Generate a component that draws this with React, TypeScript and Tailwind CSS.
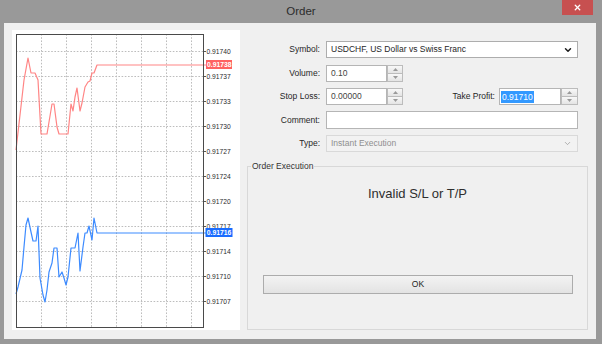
import React from "react";
import { X, ChevronDown } from "lucide-react";

const redPts =
  "16,150 24,80 28,58 31,73 35,73 38,80 41,134 47,134 52,104 54,104 57,127 59,134 68,134 71,104 73,111 75,97 77,88 80,111 82,103 85,87 88,82 90,81 92,73 94,73 97,65 206,65";
const bluePts =
  "16,294 18,287 22,270 24,247 26,225 28,218 31,232 33,241 36,241 38,226 40,278 43,295 45,302 47,290 49,272 52,263 54,248 57,248 59,277 62,272 64,278 66,285 68,277 71,248 75,248 78,233 80,271 83,247 85,233 87,233 89,226 92,240 94,218 97,233 206,233";

const prices = [
  "0.91740",
  "0.91737",
  "0.91733",
  "0.91730",
  "0.91727",
  "0.91724",
  "0.91720",
  "0.91717",
  "0.91714",
  "0.91710",
  "0.91707",
];
const vx = [41, 66, 91, 116, 141, 166, 191];

function Chart() {
  return (
    <svg width="228" height="300" viewBox="12 30 228 300" className="block">
      {vx.map((x) => (
        <line key={x} x1={x + 0.5} y1={34} x2={x + 0.5} y2={327} stroke="#bdbdbd" strokeDasharray="1.6 1.6" strokeWidth="1" />
      ))}
      {prices.map((p, i) => {
        const y = 51 + i * 25 + 0.5;
        return (
          <g key={p}>
            <line x1={16} y1={y} x2={203} y2={y} stroke="#bdbdbd" strokeDasharray="1.6 1.6" strokeWidth="1" />
            <line x1={203} y1={y} x2={206} y2={y} stroke="#555" strokeWidth="1" />
            <text x={206.5} y={y + 2.4} fontSize="6.7" fill="#2a2a2a" fontFamily="'Liberation Sans', Arial, sans-serif">
              {p}
            </text>
          </g>
        );
      })}
      <polyline points={redPts} fill="none" stroke="#ff8585" strokeWidth="1.2" strokeLinejoin="round" />
      <polyline points={bluePts} fill="none" stroke="#3d8bff" strokeWidth="1.2" strokeLinejoin="round" />
      <rect x={16.5} y={34.5} width={187} height={293} fill="none" stroke="#4a4a4a" strokeWidth="1" />
      <rect x={206} y={60} width={26} height={9} fill="#ff6262" />
      <text x={207} y={67} fontSize="6.8" fontWeight="bold" fill="#fff" fontFamily="'Liberation Sans', Arial, sans-serif">
        0.91738
      </text>
      <rect x={205.5} y={228} width={27} height={9} fill="#1a6cff" />
      <text x={206.8} y={235} fontSize="6.8" fontWeight="bold" fill="#fff" fontFamily="'Liberation Sans', Arial, sans-serif">
        0.91716
      </text>
    </svg>
  );
}

function Spin({ w = "w-[16px]" }: { w?: string }) {
  return (
    <div className={`${w} h-[17px] flex flex-col`}>
      <div className="h-[9px] border border-[#bcbcbc] bg-linear-to-b from-[#f8f8f8] to-[#e4e4e4] flex items-center justify-center">
        <svg width="5" height="3" viewBox="0 0 5 3">
          <path d="M0 3 L2.5 0 L5 3Z" fill="#9a9a9a" />
        </svg>
      </div>
      <div className="h-[8px] border border-t-0 border-[#bcbcbc] bg-linear-to-b from-[#f8f8f8] to-[#e4e4e4] flex items-center justify-center">
        <svg width="5" height="3" viewBox="0 0 5 3">
          <path d="M0 0 L2.5 3 L5 0Z" fill="#9a9a9a" />
        </svg>
      </div>
    </div>
  );
}

function Label({ children }: { children: React.ReactNode }) {
  return <div className="w-[73px] text-right pr-0 leading-none">{children}</div>;
}

export default function App() {
  return (
    <div className="w-[602px] h-[344px] bg-[#999999] flex flex-col font-['Liberation_Sans',Arial,sans-serif] text-[8.5px] text-[#262626]">
      <div className="h-[23px] grid grid-cols-[1fr_auto_1fr]">
        <div />
        <div className="text-[11.5px] text-[#2b2b2b] leading-[23px]">Order</div>
        <div className="flex justify-end pr-[9px]">
          <div className="w-[31px] h-[15px] bg-[#c75050] flex items-center justify-center">
            <X size={9} strokeWidth={3.5} color="#fff" />
          </div>
        </div>
      </div>
      <div className="ml-[4px] mr-[6px] h-[316px] bg-[#f0f0f0] flex pl-[8px] pr-[8px] pt-[7px] pb-[9px]">
        <div className="w-[228px] h-[300px] bg-white">
          <Chart />
        </div>
        <div className="ml-[7px] flex-1 flex flex-col">
          {/* Symbol */}
          <div className="mt-[11px] h-[17px] flex items-center">
            <Label>Symbol:</Label>
            <div className="ml-[6px] w-[252px] h-[17px] bg-white border border-[#adadad] flex items-center pl-[4px] pr-[4px]">
              <span className="flex-1">USDCHF, US Dollar vs Swiss Franc</span>
              <ChevronDown size={10} strokeWidth={3.5} color="#1a1a1a" />
            </div>
          </div>
          {/* Volume */}
          <div className="mt-[7px] h-[17px] flex items-center">
            <Label>Volume:</Label>
            <div className="ml-[6px] w-[61px] h-[17px] bg-white border border-[#b5b5b5] flex items-center pl-[4px] text-[#444]">
              0.10
            </div>
            <Spin />
          </div>
          {/* Stop Loss / Take Profit */}
          <div className="mt-[6px] h-[17px] flex items-center">
            <Label>Stop Loss:</Label>
            <div className="ml-[6px] w-[61px] h-[17px] bg-white border border-[#b5b5b5] flex items-center pl-[4px] text-[#444]">
              0.00000
            </div>
            <Spin />
            <div className="flex-1 text-right leading-none">Take Profit:</div>
            <div className="ml-[4px] w-[62px] h-[17px] bg-white border border-[#b5b5b5] flex items-center pl-[1px]">
              <span className="bg-[#3399ff] text-white px-[1px] leading-[12px]">0.91710</span>
            </div>
            <Spin w="w-[17px]" />
            <div className="w-[10px]" />
          </div>
          {/* Comment */}
          <div className="mt-[6px] h-[18px] flex items-center">
            <Label>Comment:</Label>
            <div className="ml-[6px] w-[252px] h-[18px] bg-white border border-[#b5b5b5]" />
          </div>
          {/* Type */}
          <div className="mt-[6px] h-[17px] flex items-center">
            <Label>Type:</Label>
            <div className="ml-[6px] w-[252px] h-[17px] bg-[#f2f2f2] border border-[#d9d9d9] flex items-center pl-[4px] pr-[5px] text-[#8f8f8f]">
              <span className="flex-1">Instant Execution</span>
              <ChevronDown size={9} strokeWidth={2} color="#9a9a9a" />
            </div>
          </div>
          {/* Group */}
          <fieldset className="mt-[9px] flex-1 border border-[#d8d8d8] m-0 p-0 min-w-0">
            <legend className="ml-[3px] px-[1px] leading-[10px] text-[#333]">Order Execution</legend>
            <div className="flex flex-col">
              <div className="mt-[15px] text-center text-[13px] leading-[16px] text-[#2e2e2e]">Invalid S/L or T/P</div>
              <div className="mt-[73px] ml-[15px] w-[310px] h-[19px] border border-[#acacac] bg-linear-to-b from-[#f3f3f3] to-[#e3e3e3] flex items-center justify-center text-[#222]">
                OK
              </div>
            </div>
          </fieldset>
        </div>
      </div>
    </div>
  );
}
